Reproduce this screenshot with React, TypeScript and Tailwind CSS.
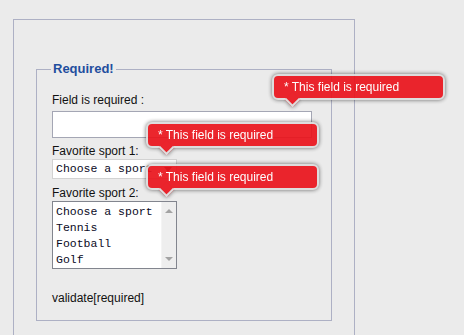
import React from 'react'

const SPORTS = ['Choose a sport', 'Tennis', 'Football', 'Golf']

function Prompt({ className }: { className: string }) {
  return (
    <div
      className={`absolute w-[173px] h-[26px] opacity-[0.92] drop-shadow-[0_0_2px_rgba(0,0,0,0.6)] ${className}`}
    >
      <div className="relative h-full rounded-[6px] border-2 border-[#dcdcdc] bg-[#ea141c] pl-[10px] leading-[22px] text-white text-[12px]">
        * This field is required
        <div className="absolute left-[13px] bottom-[-7px] w-[11px] h-[11px] rotate-45 bg-[#ea141c] border-r-2 border-b-2 border-[#dcdcdc]" />
      </div>
    </div>
  )
}

export default function App() {
  return (
    <div className="relative w-[464px] h-[335px] overflow-hidden bg-[#ebebeb] text-[12px] leading-[16px] text-[#111] font-['Liberation_Sans',Arial,sans-serif]">
      <div className="ml-[13px] mt-[19px] w-[342px] h-[330px] border border-[#adb0c4] pt-[41px] pl-[22px]">
        <fieldset className="w-[296px] h-[260px] border border-[#adb0c4] px-[15px] pt-[15px]">
          <legend className="ml-[-1px] px-[2px] text-[13px] font-bold text-[#1f4e9e]">Required!</legend>

          <div>Field is required :</div>
          <input
            type="text"
            className="mt-[3px] block w-[260px] h-[27px] bg-white border border-[#a4a6b4] outline-none"
          />

          <div className="mt-[5px]">Favorite sport 1:</div>
          <div className="flex items-center justify-between w-[125px] h-[20px] bg-white border border-[#d2d2d2] pl-[3px] pr-[4px] font-['Liberation_Mono','Courier_New',monospace] text-[11.5px] text-[#0a0a1e]">
            <span>Choose a sport</span>
            <span className="w-0 h-0 border-l-[4px] border-r-[4px] border-t-[5px] border-l-transparent border-r-transparent border-t-[#333]" />
          </div>

          <div className="mt-[6px]">Favorite sport 2:</div>
          <div className="flex w-[125px] h-[68px] bg-white border border-[#82858e]">
            <div className="flex-1 pl-[3px] pt-[2px] font-['Liberation_Mono','Courier_New',monospace] text-[11.5px] leading-[16px] text-[#0a0a1e]">
              {SPORTS.map((s) => (
                <div key={s}>{s}</div>
              ))}
            </div>
            <div className="flex flex-col items-center justify-between w-[15px] bg-[#eeeeee] border-l border-[#f4f4f4] py-[7px]">
              <span className="w-0 h-0 border-l-[4px] border-r-[4px] border-b-[4px] border-l-transparent border-r-transparent border-b-[#a3a3a3]" />
              <span className="w-0 h-0 border-l-[4px] border-r-[4px] border-t-[4px] border-l-transparent border-r-transparent border-t-[#a3a3a3]" />
            </div>
          </div>

          <div className="mt-[21px]">validate[required]</div>
        </fieldset>
      </div>

      <Prompt className="left-[272px] top-[74px]" />
      <Prompt className="left-[146px] top-[122px]" />
      <Prompt className="left-[146px] top-[164px]" />
    </div>
  )
}
